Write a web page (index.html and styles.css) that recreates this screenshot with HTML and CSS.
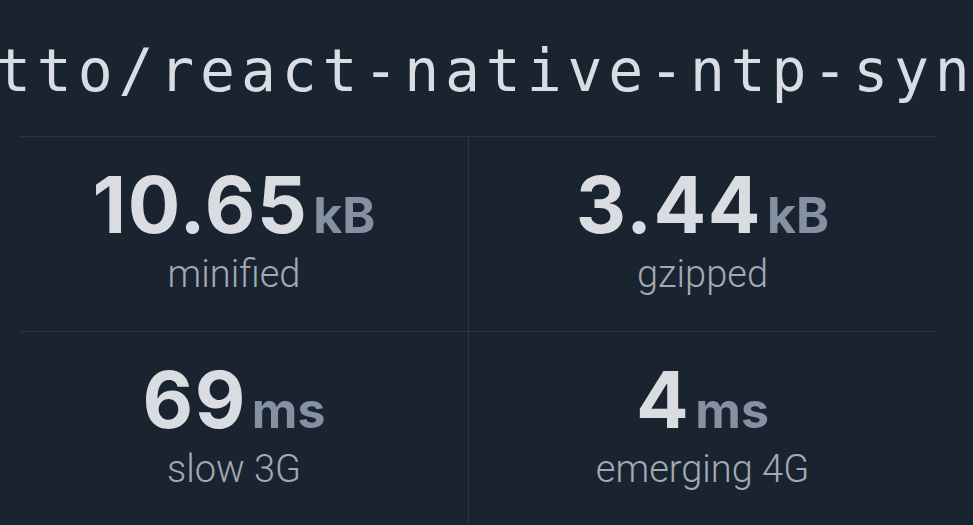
FILE: index.html
```html
<!DOCTYPE html>
<html lang="en">
<head>
<meta charset="utf-8">
<title>react-native-ntp-sync</title>
<link rel="stylesheet" href="styles.css">
</head>
<body>
  <main class="page">
    <h1 class="title">tto/react-native-ntp-sync</h1>
    <section class="stats">
      <div class="stat">
        <div class="value"><span class="num">10.65</span><span class="unit">kB</span></div>
        <div class="label">minified</div>
      </div>
      <div class="stat">
        <div class="value"><span class="num">3.44</span><span class="unit">kB</span></div>
        <div class="label">gzipped</div>
      </div>
      <div class="stat">
        <div class="value"><span class="num">69</span><span class="unit">ms</span></div>
        <div class="label">slow 3G</div>
      </div>
      <div class="stat">
        <div class="value"><span class="num">4</span><span class="unit">ms</span></div>
        <div class="label">emerging 4G</div>
      </div>
    </section>
  </main>
</body>
</html>
```
FILE: styles.css
```css
html, body {
  margin: 0;
  padding: 0;
  background: #1a2330;
  height: 100%;
  overflow: hidden;
}

.page {
  display: flex;
  flex-direction: column;
}

.title {
  margin: 0;
  padding-top: 42px;
  height: 94px;
  font-family: "DejaVu Sans Mono", monospace;
  font-weight: normal;
  font-size: 58px;
  line-height: 58px;
  letter-spacing: 5.9px;
  text-indent: -4px;
  color: #d9dde3;
  white-space: nowrap;
  overflow: hidden;
}

.stats {
  display: grid;
  grid-template-columns: 449px 468px;
  margin-left: 19px;
}

.stat {
  border-top: 1px solid #2a3442;
  display: flex;
  flex-direction: column;
  align-items: center;
  padding-top: 29px;
  height: 165px;
}

.stat:nth-child(odd) {
  padding-right: 19px;
}

.stat:nth-child(even) {
  border-left: 1px solid #2a3442;
}

.value {
  display: flex;
  align-items: baseline;
  gap: 5px;
  font-family: Inter, "Liberation Sans", sans-serif;
  font-weight: 700;
  line-height: 1;
}

.num {
  font-size: 78px;
  color: #d9dce1;
  letter-spacing: 1.5px;
}

.unit {
  font-size: 50px;
  color: #8590a2;
}

.label {
  margin-top: 11px;
  font-family: Roboto, "Liberation Sans", sans-serif;
  font-weight: 300;
  font-size: 38px;
  line-height: 1;
  color: #a1a9b4;
}
```
